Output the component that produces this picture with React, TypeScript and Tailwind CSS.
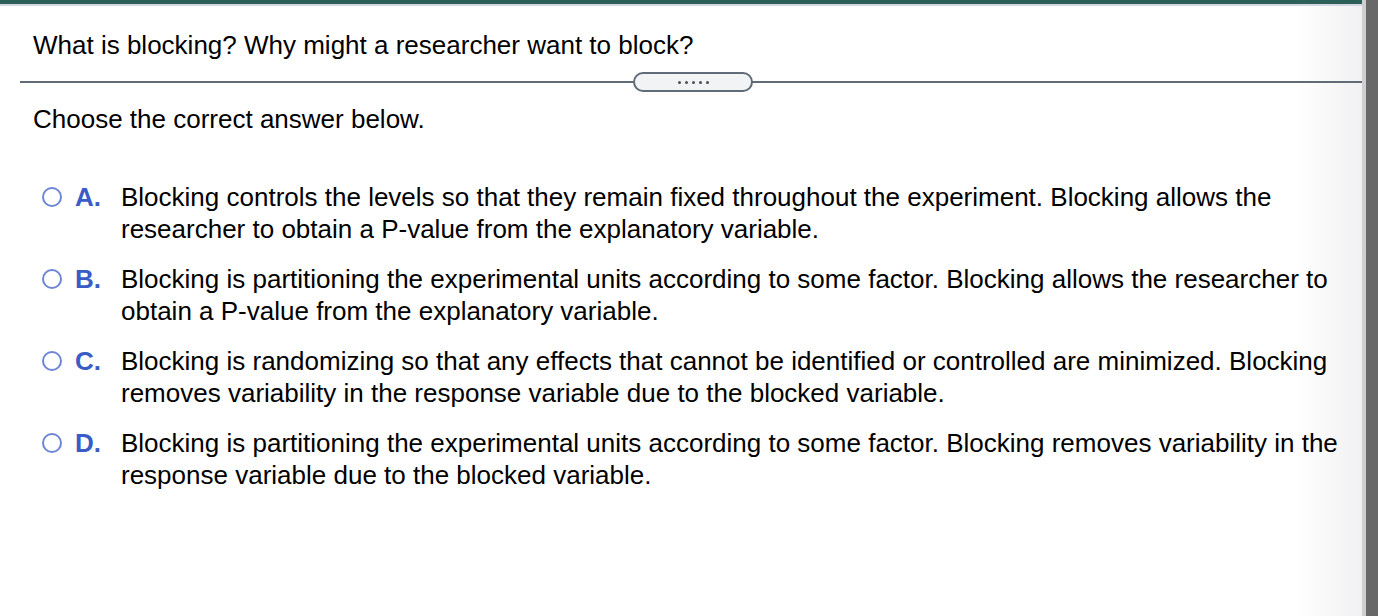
const options = [
  {
    letter: "A.",
    text: "Blocking controls the levels so that they remain fixed throughout the experiment. Blocking allows the researcher to obtain a P-value from the explanatory variable.",
  },
  {
    letter: "B.",
    text: "Blocking is partitioning the experimental units according to some factor. Blocking allows the researcher to obtain a P-value from the explanatory variable.",
  },
  {
    letter: "C.",
    text: "Blocking is randomizing so that any effects that cannot be identified or controlled are minimized. Blocking removes variability in the response variable due to the blocked variable.",
  },
  {
    letter: "D.",
    text: "Blocking is partitioning the experimental units according to some factor. Blocking removes variability in the response variable due to the blocked variable.",
  },
];

export default function App() {
  return (
    <div className="flex h-[616px] w-[1378px] overflow-hidden bg-white font-['Liberation_Sans',Arial,sans-serif] text-black">
      {/* main panel */}
      <div className="flex w-[1362px] flex-col bg-[linear-gradient(to_right,#ffffff_0px,#ffffff_1295px,#f1f1f3_1362px)]">
        <div className="h-[4px] bg-[#2b5f58]" />
        <div className="h-[2px] bg-[#d6d6e2]" />

        <p className="pl-[33px] pt-[23px] text-[26px] leading-[32px]">
          What is blocking? Why might a researcher want to block?
        </p>

        {/* divider with expand pill */}
        <div className="relative mt-[11px] ml-[20px] flex h-[20px] items-center">
          <div className="h-[2px] w-full bg-[#5f6b77]" />
          <button className="absolute left-[613px] top-0 flex h-[20px] w-[120px] items-center justify-center gap-[4px] rounded-full border-2 border-[#5f6b77] bg-[#f2f3f5]">
            <span className="h-[3px] w-[3px] rounded-full bg-[#4a4f55]" />
            <span className="h-[3px] w-[3px] rounded-full bg-[#4a4f55]" />
            <span className="h-[3px] w-[3px] rounded-full bg-[#4a4f55]" />
            <span className="h-[3px] w-[3px] rounded-full bg-[#4a4f55]" />
            <span className="h-[3px] w-[3px] rounded-full bg-[#4a4f55]" />
          </button>
        </div>

        <p className="pl-[33px] pt-[11px] text-[26px] leading-[32px]">Choose the correct answer below.</p>

        <div className="mt-[46px] flex flex-col gap-[18px] pl-[42px]">
          {options.map((o) => (
            <div key={o.letter} className="flex items-start">
              <div className="mt-[6px] h-[20px] w-[20px] shrink-0 rounded-full border-2 border-[#6f86d6]" />
              <span className="w-[59px] shrink-0 pl-[13px] text-[26px] font-bold leading-[32px] text-[#3a5cc6]">
                {o.letter}
              </span>
              <p className="w-[1222px] text-[26px] leading-[32px]">{o.text}</p>
            </div>
          ))}
        </div>
      </div>
      {/* scrollbar edge */}
      <div className="w-[4px] bg-[#cfcfcf]" />
      <div className="flex-1 bg-[#686868]" />
    </div>
  );
}
